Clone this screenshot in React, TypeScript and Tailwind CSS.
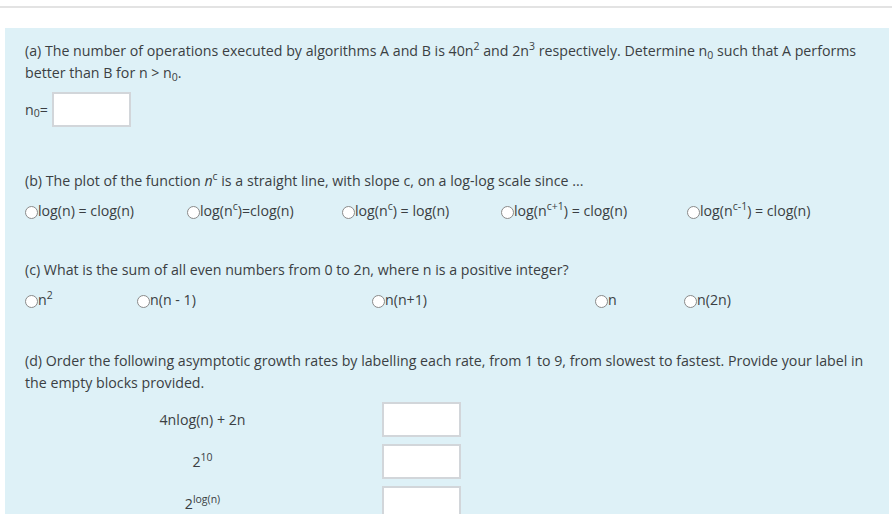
import React from 'react';

const Radio: React.FC<{ name: string }> = ({ name }) => (
  <input
    type="radio"
    name={name}
    className="appearance-none w-[13px] h-[13px] rounded-full border border-[#8a8a8a] bg-white shrink-0 m-0 translate-y-[1px]"
  />
);

const Box: React.FC<{ className?: string }> = ({ className = '' }) => (
  <input
    type="text"
    className={`w-[79px] h-[35px] bg-white border-2 border-[#d2d6da] outline-none ${className}`}
  />
);

const Option: React.FC<{ name: string; width: string; children: React.ReactNode }> = ({ name, width, children }) => (
  <label className={`flex items-center ${width}`}>
    <Radio name={name} />
    <span>{children}</span>
  </label>
);

const sup = 'text-[10.5px] relative -top-[6px] leading-none';
const sub = 'text-[10.5px] leading-none';

export default function App() {
  return (
    <div className="bg-white min-h-[514px] text-[14.2px] leading-[22px] text-[#3b3f43]" style={{ fontFamily: '"Open Sans", "Liberation Sans", sans-serif' }}>
      <div className="h-[6px]" />
      <div className="border-t-2 border-[#e3e3e3]" />
      <div className="h-[20px]" />
      <div className="ml-[5px] w-[884px] bg-[#def1f7] pl-[20px] pr-[16px] pt-[12px] pb-[20px]">
        {/* (a) */}
        <p>
          (a) The number of operations executed by algorithms A and B is 40n<sup className={sup}>2</sup> and 2n
          <sup className={sup}>3</sup> respectively. Determine n<sub className={sub}>0</sub> such that A performs
          better than B for n &gt; n<sub className={sub}>0</sub>.
        </p>
        <div className="flex items-center mt-[8px]">
          <span>
            n<sub className={sub}>0</sub>=
          </span>
          <Box className="ml-[4px]" />
        </div>

        {/* (b) */}
        <p className="mt-[43px]">
          (b) The plot of the function <i>n</i>
          <sup className={sup}>c</sup> is a straight line, with slope c, on a log-log scale since ...
        </p>
        <div className="flex mt-[8px]">
          <Option name="b" width="w-[162px]">log(n) = clog(n)</Option>
          <Option name="b" width="w-[155px]">
            log(n<sup className={sup}>c</sup>)=clog(n)
          </Option>
          <Option name="b" width="w-[159px]">
            log(n<sup className={sup}>c</sup>) = log(n)
          </Option>
          <Option name="b" width="w-[186px]">
            log(n<sup className={sup}>c+1</sup>) = clog(n)
          </Option>
          <Option name="b" width="w-[150px]">
            log(n<sup className={sup}>c-1</sup>) = clog(n)
          </Option>
        </div>

        {/* (c) */}
        <p className="mt-[37px]">
          (c) What is the sum of all even numbers from 0 to 2n, where n is a positive integer?
        </p>
        <div className="flex mt-[8px]">
          <Option name="c" width="w-[112px]">
            n<sup className={sup}>2</sup>
          </Option>
          <Option name="c" width="w-[235px]">n(n - 1)</Option>
          <Option name="c" width="w-[223px]">n(n+1)</Option>
          <Option name="c" width="w-[89px]">n</Option>
          <Option name="c" width="w-[100px]">n(2n)</Option>
        </div>

        {/* (d) */}
        <p className="mt-[39px]">
          (d) Order the following asymptotic growth rates by labelling each rate, from 1 to 9, from slowest to fastest. Provide your label in
          the empty blocks provided.
        </p>
        <div className="mt-[8px] flex flex-col gap-[7px]">
          <div className="flex items-center">
            <div className="w-[355px] text-center">4nlog(n) + 2n</div>
            <Box className="ml-[2px]" />
          </div>
          <div className="flex items-center">
            <div className="w-[355px] text-center">
              2<sup className={sup}>10</sup>
            </div>
            <Box className="ml-[2px]" />
          </div>
          <div className="flex items-center">
            <div className="w-[355px] text-center">
              2<sup className={sup}>log(n)</sup>
            </div>
            <Box className="ml-[2px]" />
          </div>
        </div>
      </div>
    </div>
  );
}
